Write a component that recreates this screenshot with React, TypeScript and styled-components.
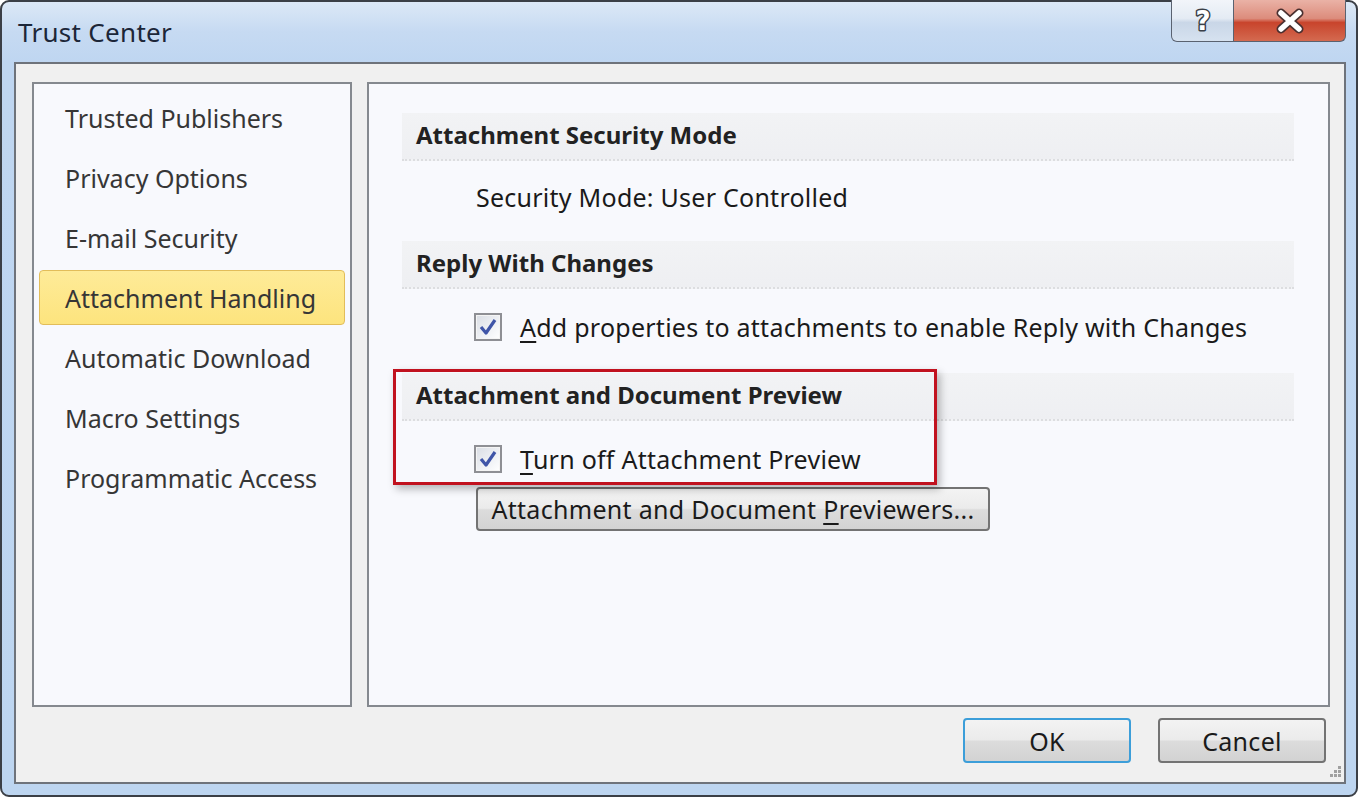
import React from 'react';
import styled, { createGlobalStyle } from 'styled-components';

const GlobalStyle = createGlobalStyle`
  body {
    margin: 0;
    background: #ffffff;
    font-family: "Noto Sans", "Open Sans", sans-serif;
  }
`

const Window = styled.div`
  box-sizing: border-box;
  width: 1358px;
  height: 797px;
  border: 2px solid #3b3f46;
  border-radius: 9px;
  background: linear-gradient(180deg, #dce8f6 0%, #c6daf2 30px, #bfd6f1 60px, #bdd5f0 100%);
  padding: 0 10px 11px 12px;
  display: flex;
  flex-direction: column;
`

const TitleBar = styled.div`
  height: 60px;
  display: flex;
  justify-content: space-between;
  align-items: flex-start;
`

const Title = styled.div`
  padding: 12px 0 0 4px;
  font-size: 26px;
  color: #1c2638;
  letter-spacing: 0.3px;
`

const Caption = styled.div`
  display: flex;
  margin-top: -2px;
`

const CaptionButton = styled.div<{ $close?: boolean }>`
  width: ${p => (p.$close ? '112px' : '63px')};
  height: 42px;
  box-sizing: border-box;
  border: 1px solid #5a6270;
  border-top: none;
  border-left: ${p => (p.$close ? 'none' : '1px solid #5a6270')};
  border-radius: ${p => (p.$close ? '0 0 6px 0' : '0 0 0 6px')};
  background: ${p =>
    p.$close
      ? 'linear-gradient(180deg, #eab2a6 0%, #dc8c7c 45%, #c8442c 55%, #d46a50 100%)'
      : 'linear-gradient(180deg, #f2f5fa 0%, #e4ebf4 45%, #c9d6e7 55%, #d6e2f0 100%)'};
  display: flex;
  align-items: center;
  justify-content: center;
`

const HelpText = styled.text`
  font-family: "DejaVu Sans", sans-serif;
  font-weight: bold;
  font-size: 26px;
  fill: #ffffff;
  stroke: #3a3f48;
  stroke-width: 3px;
  paint-order: stroke fill;
  stroke-linejoin: round;
`

const Client = styled.div`
  flex: 1;
  position: relative;
  box-sizing: border-box;
  border: 2px solid #6e737b;
  background: #f0f0f0;
  padding: 18px 14px 19px 16px;
  display: flex;
  flex-direction: column;
`

const Panes = styled.div`
  display: flex;
  gap: 15px;
  height: 625px;
`

const Pane = styled.div<{ $width?: string }>`
  box-sizing: border-box;
  ${p => (p.$width ? `width: ${p.$width};` : 'flex: 1;')}
  border: 2px solid #85898f;
  background: #f8f9fd;
  position: relative;
`

const NavList = styled.div`
  padding: 6px 5px;
  display: flex;
  flex-direction: column;
`

const NavItem = styled.div<{ $active?: boolean }>`
  height: 55px;
  margin-bottom: 5px;
  box-sizing: border-box;
  padding-left: 25px;
  display: flex;
  align-items: center;
  font-size: 25px;
  color: #363636;
  border-radius: 4px;
  border: 1px solid ${p => (p.$active ? '#e2bd5a' : 'transparent')};
  background: ${p => (p.$active ? 'linear-gradient(180deg, #feeb98 0%, #fde47e 100%)' : 'transparent')};
`

const Content = styled.div`
  padding: 29px 34px 0 33px;
`

const Section = styled.div`
  margin-bottom: 24px;
`

const SectionHeader = styled.div`
  height: 48px;
  box-sizing: border-box;
  padding: 0 0 4px 14px;
  display: flex;
  align-items: center;
  font-size: 24px;
  font-weight: bold;
  color: #222222;
  background: linear-gradient(180deg, #f2f3f5 0%, #eeeff2 100%);
  border-bottom: 2px dotted #dcdde0;
`

const SectionBody = styled.div`
  padding: 16px 0 0 72px;
`

const Row = styled.div<{ $tall?: boolean }>`
  height: ${p => (p.$tall ? '44px' : '40px')};
  display: flex;
  align-items: center;
  gap: 18px;
  font-size: 25px;
  letter-spacing: 0.25px;
  color: #1a1a1a;
  padding-left: ${p => (p.$tall ? '0' : '2px')};
`

const Key = styled.span`
  text-decoration: underline;
  text-underline-offset: 4px;
`

const Box = styled.div`
  width: 28px;
  height: 28px;
  box-sizing: border-box;
  border: 2px solid #8e8f94;
  background: linear-gradient(135deg, #d9dde4 0%, #f0f2f6 60%, #ffffff 100%);
  box-shadow: inset 0 0 0 1px #f4f4f4;
  display: flex;
  align-items: center;
  justify-content: center;
`

const Button = styled.div<{ $width: string; $focus?: boolean }>`
  width: ${p => p.$width};
  height: 45px;
  box-sizing: border-box;
  border: ${p => (p.$focus ? '2px solid #3c9ed9' : '2px solid #737373')};
  border-radius: 4px;
  background: linear-gradient(180deg, #f3f3f3 0%, #ebebeb 48%, #dcdcdc 52%, #d2d2d2 100%);
  display: flex;
  align-items: center;
  justify-content: center;
  font-size: 25px;
  letter-spacing: 0.3px;
  color: #1a1a1a;
`

const PreviewButton = styled(Button)`
  margin: 6px 0 0 2px;
  height: 44px;
`

const Highlight = styled.div`
  position: absolute;
  left: 24px;
  top: 285px;
  width: 544px;
  height: 116px;
  box-sizing: border-box;
  border: 3px solid #c1121f;
  box-shadow: 3px 4px 8px rgba(0, 0, 0, 0.28);
  pointer-events: none;
`

const Footer = styled.div`
  flex: 1;
  display: flex;
  justify-content: flex-end;
  align-items: flex-end;
  gap: 27px;
  padding-right: 4px;
`

const Grip = styled.svg`
  position: absolute;
  right: 2px;
  bottom: 4px;
`

const Check = () => (
  <Box>
    <svg width="20" height="20" viewBox="0 0 20 20">
      <path d="M3 10 L8 16 L17 3" fill="none" stroke="#3f55a8" strokeWidth="3.2" strokeLinejoin="round" />
    </svg>
  </Box>
)

const navItems = [
  'Trusted Publishers',
  'Privacy Options',
  'E-mail Security',
  'Attachment Handling',
  'Automatic Download',
  'Macro Settings',
  'Programmatic Access',
];

export default function App() {
  return (
    <>
      <GlobalStyle />
      <Window>
        <TitleBar>
          <Title>Trust Center</Title>
          <Caption>
            <CaptionButton>
              <svg width="24" height="30" viewBox="0 0 24 30">
                <HelpText x="12" y="24" textAnchor="middle">?</HelpText>
              </svg>
            </CaptionButton>
            <CaptionButton $close>
              <svg width="40" height="26" viewBox="0 0 40 26">
                <path d="M11 5 L29 21 M29 5 L11 21" stroke="#4a3030" strokeWidth="9" strokeLinecap="round" />
                <path d="M11 5 L29 21 M29 5 L11 21" stroke="#ffffff" strokeWidth="5.5" strokeLinecap="round" />
              </svg>
            </CaptionButton>
          </Caption>
        </TitleBar>
        <Client>
          <Panes>
            <Pane $width="320px">
              <NavList>
                {navItems.map(item => (
                  <NavItem key={item} $active={item === 'Attachment Handling'}>{item}</NavItem>
                ))}
              </NavList>
            </Pane>
            <Pane>
              <Content>
                <Section>
                  <SectionHeader>Attachment Security Mode</SectionHeader>
                  <SectionBody>
                    <Row>Security Mode: User Controlled</Row>
                  </SectionBody>
                </Section>
                <Section>
                  <SectionHeader>Reply With Changes</SectionHeader>
                  <SectionBody>
                    <Row $tall>
                      <Check />
                      <span><Key>A</Key>dd properties to attachments to enable Reply with Changes</span>
                    </Row>
                  </SectionBody>
                </Section>
                <Section>
                  <SectionHeader>Attachment and Document Preview</SectionHeader>
                  <SectionBody>
                    <Row $tall>
                      <Check />
                      <span><Key>T</Key>urn off Attachment Preview</span>
                    </Row>
                    <PreviewButton $width="514px">
                      <span>Attachment and Document <Key>P</Key>reviewers...</span>
                    </PreviewButton>
                  </SectionBody>
                </Section>
              </Content>
              <Highlight />
            </Pane>
          </Panes>
          <Footer>
            <Button $width="168px" $focus>OK</Button>
            <Button $width="168px">Cancel</Button>
          </Footer>
          <Grip width="14" height="14" viewBox="0 0 14 14">
            <g fill="#a0a0a0">
              <rect x="10" y="2" width="3" height="3" />
              <rect x="6" y="6" width="3" height="3" />
              <rect x="10" y="6" width="3" height="3" />
              <rect x="2" y="10" width="3" height="3" />
              <rect x="6" y="10" width="3" height="3" />
              <rect x="10" y="10" width="3" height="3" />
            </g>
          </Grip>
        </Client>
      </Window>
    </>
  );
}
